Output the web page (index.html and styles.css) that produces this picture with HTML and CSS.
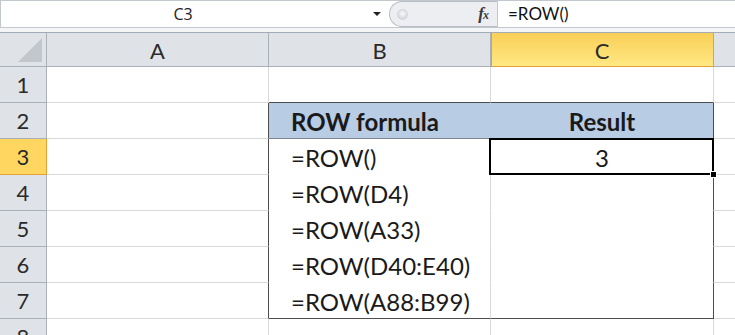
FILE: index.html
```html
<!DOCTYPE html>
<html>
<head>
  <meta charset="UTF-8">
  <link rel="stylesheet" href="styles.css">
</head>
<body>
  <div class="sheet">
    <div class="formula-bar">
      <div class="name-box">C3</div>
      <div class="name-drop"><span class="caret"></span></div>
      <div class="fx-box">
        <span class="knob"></span>
        <span class="fx">f<span class="fx-x">x</span></span>
      </div>
      <div class="formula-input">=ROW()</div>
    </div>
    <div class="bar-gap"></div>

    <div class="grid">
      <!-- column headers -->
      <div class="corner"><span class="corner-tri"></span></div>
      <div class="col-head">A</div>
      <div class="col-head">B</div>
      <div class="col-head active">C</div>
      <div class="col-head last"></div>

      <!-- row 1 -->
      <div class="row-head">1</div>
      <div class="cell"></div>
      <div class="cell tbl-above"></div>
      <div class="cell tbl-above"></div>
      <div class="cell last"></div>

      <!-- row 2 -->
      <div class="row-head">2</div>
      <div class="cell tbl-left"></div>
      <div class="cell th th-first">ROW formula</div>
      <div class="cell th th-last center">Result</div>
      <div class="cell last"></div>

      <!-- row 3 -->
      <div class="row-head active">3</div>
      <div class="cell tbl-left"></div>
      <div class="cell td">=ROW()</div>
      <div class="cell td td-last center selected">
        3
        <span class="sel-box"></span>
        <span class="fill-handle"></span>
      </div>
      <div class="cell last"></div>

      <!-- row 4 -->
      <div class="row-head">4</div>
      <div class="cell tbl-left"></div>
      <div class="cell td">=ROW(D4)</div>
      <div class="cell td td-last"></div>
      <div class="cell last"></div>

      <!-- row 5 -->
      <div class="row-head">5</div>
      <div class="cell tbl-left"></div>
      <div class="cell td">=ROW(A33)</div>
      <div class="cell td td-last"></div>
      <div class="cell last"></div>

      <!-- row 6 -->
      <div class="row-head">6</div>
      <div class="cell tbl-left"></div>
      <div class="cell td">=ROW(D40:E40)</div>
      <div class="cell td td-last"></div>
      <div class="cell last"></div>

      <!-- row 7 -->
      <div class="row-head">7</div>
      <div class="cell tbl-left"></div>
      <div class="cell td tbl-bottom">=ROW(A88:B99)</div>
      <div class="cell td td-last tbl-bottom"></div>
      <div class="cell last"></div>

      <!-- row 8 -->
      <div class="row-head">8</div>
      <div class="cell"></div>
      <div class="cell"></div>
      <div class="cell"></div>
      <div class="cell last"></div>
    </div>
  </div>
</body>
</html>
```

FILE: styles.css
```css
:root {
  --header-bg: #dfe3e8;
  --header-line: #aab0b8;
  --grid-line: #d9d9d9;
  --table-line: #4d4d4d;
  --table-head: #b8cce4;
  --active-bg: #ffd760;
  --active-line: #e2a238;
  --text: #1a1a1a;
}

body {
  margin: 0;
  background: #fff;
  font-family: Lato, "Liberation Sans", sans-serif;
  color: var(--text);
  overflow: hidden;
}

.sheet {
  width: 735px;
  height: 335px;
  overflow: hidden;
}

/* formula bar */

.formula-bar {
  display: flex;
  height: 28px;
  box-sizing: border-box;
  border-top: 1px solid #c3c8cf;
  border-left: 1px solid #c3c8cf;
  border-bottom: 1px solid #c3c8cf;
}

.name-box {
  width: 364px;
  text-align: center;
  font-family: "Open Sans", sans-serif;
  font-size: 16px;
  line-height: 26px;
  color: #222;
}

.name-drop {
  width: 24px;
  display: flex;
  align-items: center;
  justify-content: center;
}

.caret {
  width: 0;
  height: 0;
  border-left: 4px solid transparent;
  border-right: 4px solid transparent;
  border-top: 4px solid #222;
}

.fx-box {
  width: 108px;
  box-sizing: border-box;
  background: #eceef1;
  border: 1px solid #b9bec6;
  border-right: none;
  border-radius: 13px 0 0 13px;
  display: flex;
  align-items: center;
  justify-content: space-between;
  padding: 0 9px 0 7px;
}

.knob {
  width: 9px;
  height: 9px;
  border-radius: 50%;
  background: radial-gradient(circle at 50% 40%, #fafbfc 0, #d5d9de 70%);
  border: 1px solid #d3d7dc;
}

.fx {
  font-family: "Liberation Serif", serif;
  font-style: italic;
  font-weight: bold;
  font-size: 17px;
  color: #3a3a3a;
  letter-spacing: -1px;
}

.fx-x {
  font-size: 12px;
}

.formula-input {
  flex: 1;
  border-left: 1px solid #c3c8cf;
  padding-left: 10px;
  font-size: 17px;
  line-height: 26px;
  color: #111;
}

.bar-gap {
  height: 4px;
  background: #f4f5f7;
}

/* grid */

.grid {
  display: grid;
  grid-template-columns: 47px 222px 222px 223px 1fr;
  grid-template-rows: 34px repeat(8, 36px);
  border-top: 1px solid #a3abb8;
}

.corner,
.col-head,
.row-head,
.cell {
  box-sizing: border-box;
  border-right: 1px solid var(--grid-line);
  border-bottom: 1px solid var(--grid-line);
}

.corner {
  background: var(--header-bg);
  border-right-color: var(--header-line);
  border-bottom-color: var(--header-line);
  position: relative;
}

.corner-tri {
  position: absolute;
  right: 4px;
  bottom: 4px;
  width: 0;
  height: 0;
  border-left: 24px solid transparent;
  border-bottom: 24px solid #c3c7cc;
}

.col-head {
  background: var(--header-bg);
  border-right-color: var(--header-line);
  border-bottom-color: var(--header-line);
  display: flex;
  align-items: center;
  justify-content: center;
  padding-top: 2px;
  font-size: 22px;
  color: #2a2a2a;
}

.col-head.active {
  background: linear-gradient(#f9cf57, #ffe883);
  border-right-color: var(--active-line);
  border-bottom-color: var(--active-line);
  box-shadow: inset 1px 0 0 var(--active-line);
}

.col-head.last {
  border-right: none;
}

.row-head {
  background: var(--header-bg);
  border-right-color: var(--header-line);
  border-bottom-color: var(--header-line);
  display: flex;
  align-items: center;
  justify-content: center;
  font-size: 22px;
  color: #2a2a2a;
}

.row-head.active {
  background: var(--active-bg);
  border-right-color: var(--active-line);
  border-bottom-color: var(--active-line);
}

.cell {
  display: flex;
  align-items: flex-end;
  padding-bottom: 6px;
  font-size: 24px;
  line-height: 20px;
}

.cell.last {
  border-right: none;
}

.center {
  justify-content: center;
}

/* table block B2:C7 */

.tbl-above {
  border-bottom-color: var(--table-line);
}

.tbl-left {
  border-right-color: var(--table-line);
}

.th {
  background: var(--table-head);
  border-bottom-color: #7f8690;
  font-weight: bold;
}

.th-first {
  border-right-color: var(--table-head);
  padding-left: 22px;
}

.th-last,
.td-last {
  border-right-color: var(--table-line);
}

.td {
  border-bottom-color: #fff;
  padding-left: 22px;
}

.td-last {
  padding-left: 0;
}

.tbl-bottom {
  border-bottom-color: var(--table-line);
}

/* active cell C3 */

.selected {
  position: relative;
}

.sel-box {
  position: absolute;
  left: -2px;
  top: -1px;
  right: -1px;
  bottom: -1px;
  border: 2px solid #000;
  z-index: 2;
}

.fill-handle {
  position: absolute;
  right: -4px;
  bottom: -4px;
  width: 5px;
  height: 5px;
  background: #000;
  border: 1px solid #fff;
  z-index: 3;
}
```
